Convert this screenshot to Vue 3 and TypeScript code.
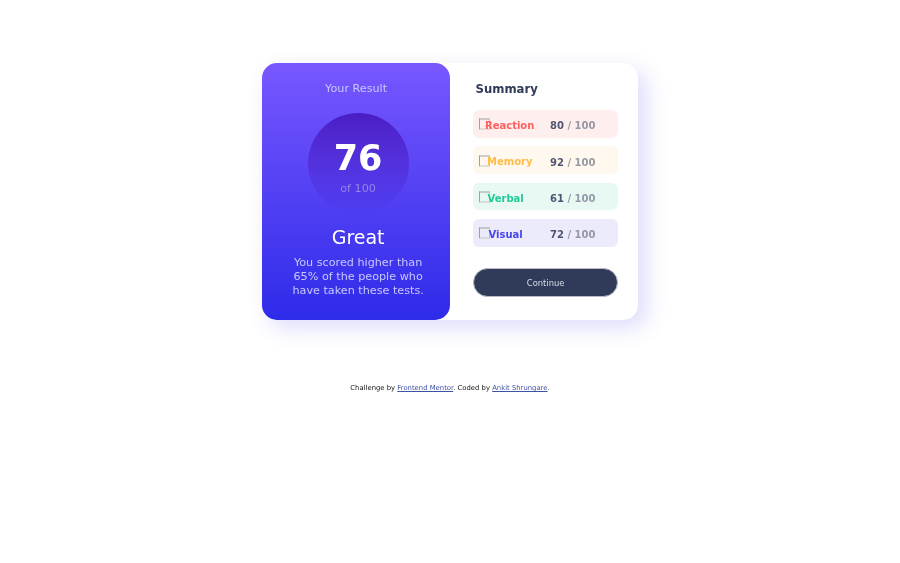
<script setup lang="ts">
interface Category {
  name: string
  score: number
  color: string
  tint: string
  indent: number
}

const categories: Category[] = [
  { name: 'Reaction', score: 80, color: '#ff5f5f', tint: '#ffeeee', indent: 6 },
  { name: 'Memory', score: 92, color: '#ffbc48', tint: '#fff8ee', indent: 8 },
  { name: 'Verbal', score: 61, color: '#20cb98', tint: '#e8f9f4', indent: 8.5 },
  { name: 'Visual', score: 72, color: '#4a46ea', tint: '#ebebfc', indent: 9.5 }
]
</script>

<template>
  <div class="page">
    <main class="card">
      <section class="result">
        <h2 class="result-title">Your Result</h2>
        <div class="score-circle">
          <span class="score">76</span>
          <span class="score-of">of 100</span>
        </div>
        <p class="verdict">Great</p>
        <p class="blurb">You scored higher than 65% of the people who have taken these tests.</p>
      </section>

      <section class="summary">
        <h2 class="summary-title">Summary</h2>
        <ul class="rows">
          <li
            v-for="cat in categories"
            :key="cat.name"
            class="row"
            :style="{ background: cat.tint }"
          >
            <div class="row-name">
              <span class="broken-icon"></span>
              <span class="row-label" :style="{ color: cat.color, marginLeft: cat.indent + 'px' }">{{ cat.name }}</span>
            </div>
            <div class="row-score">{{ cat.score }} <span class="row-max">/ 100</span></div>
          </li>
        </ul>
        <button class="continue" type="button">Continue</button>
      </section>
    </main>

    <footer class="attribution">
      Challenge by <a href="#">Frontend Mentor</a>. Coded by <a href="#">Ankit Shrungare</a>.
    </footer>
  </div>
</template>

<style>
html,
body {
  margin: 0;
  background: #fff;
}
</style>

<style scoped>
.page {
  display: flex;
  flex-direction: column;
  align-items: center;
  padding-top: 62.7px;
  height: 500px;
  font-family: 'DejaVu Sans', sans-serif;
  will-change: transform;
}

.card {
  display: flex;
  width: 375.5px;
  height: 257.3px;
  border-radius: 15px;
  background: #fff;
  box-shadow: 8px 8px 22px rgba(80, 80, 235, 0.2);
}

.result {
  box-sizing: border-box;
  width: 187.75px;
  padding-top: 19.3px;
  display: flex;
  flex-direction: column;
  align-items: center;
  border-radius: 15px;
  color: #fff;
  background: linear-gradient(180deg, #7857ff 0%, #2e2be9 100%);
}

.result-title {
  margin: 0;
  font-size: 11.2px;
  font-weight: 400;
  line-height: 14px;
  color: #c8c7ff;
}

.score-circle {
  width: 101px;
  height: 101px;
  margin: 17px 0 0 4px;
  border-radius: 50%;
  display: flex;
  flex-direction: column;
  align-items: center;
  background: linear-gradient(180deg, rgba(74, 29, 196, 1) 0%, rgba(64, 40, 220, 0) 100%);
}

.score {
  margin-top: 23px;
  font-size: 35px;
  font-weight: 700;
  line-height: 45px;
}

.score-of {
  margin-top: 1px;
  font-size: 11.2px;
  line-height: 14px;
  color: #8f86ea;
}

.verdict {
  margin: 11px 0 0 4px;
  font-size: 19px;
  line-height: 24px;
}

.blurb {
  margin: 7.4px 0 0 4px;
  width: 140px;
  font-size: 11.2px;
  line-height: 13.6px;
  text-align: center;
  color: #c8c7ff;
}

.summary {
  box-sizing: border-box;
  width: 187.75px;
  padding: 18px 20px 0 23px;
}

.summary-title {
  margin: 0 0 0 2.5px;
  font-size: 11.7px;
  font-weight: 700;
  line-height: 16px;
  color: #303b5a;
}

.rows {
  list-style: none;
  margin: 13.3px 0 0;
  padding: 0;
  display: flex;
  flex-direction: column;
  gap: 8.55px;
}

.row {
  display: grid;
  grid-template-columns: 77px auto;
  align-items: center;
  height: 27.8px;
  border-radius: 6px;
}

.row-name {
  display: flex;
  align-items: center;
  padding-left: 6px;
  font-size: 10px;
  font-weight: 700;
}

.broken-icon {
  box-sizing: border-box;
  flex: none;
  width: 11px;
  height: 11px;
  margin-right: -11px;
  transform: translateY(0.5px);
  border: 1px solid #a0a0a0;
  border-right-color: #c6c6c6;
  border-bottom-color: #c6c6c6;
}

.row-label {
  line-height: 14px;
  transform: translateY(1.5px);
}

.row-score {
  font-size: 10px;
  font-weight: 700;
  color: #303b5a;
  opacity: 0.85;
  transform: translateY(1.5px);
}

.row-max {
  color: #858999;
}

.continue {
  box-sizing: border-box;
  display: block;
  width: 144.7px;
  height: 29.3px;
  margin: 21px 0 0 0.3px;
  padding: 1px 0 0;
  border: 1px solid #b9bcc8;
  border-radius: 15px;
  background: #303b5a;
  color: #d9dbe3;
  font-family: inherit;
  font-size: 8.4px;
}

.attribution {
  margin-top: 63px;
  font-size: 6.85px;
  line-height: 11px;
  color: #111;
}

.attribution a {
  color: #3e52a3;
}
</style>
